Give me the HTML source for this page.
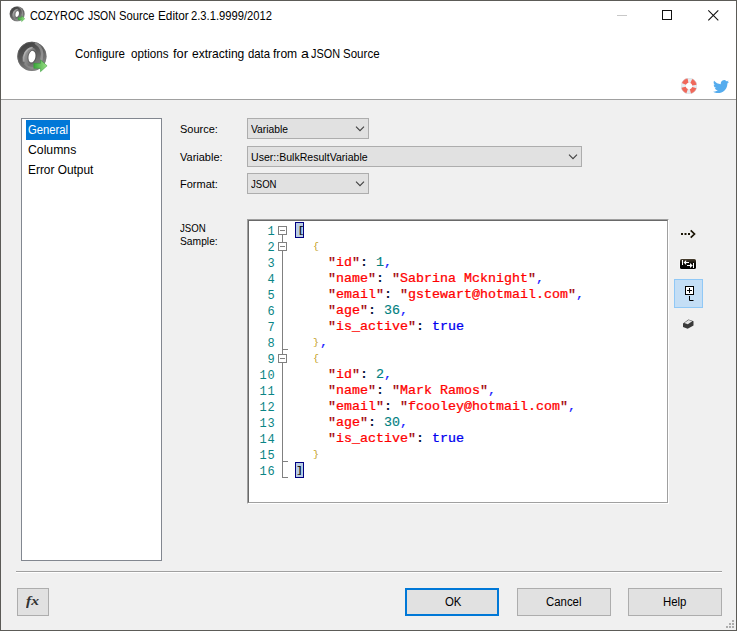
<!DOCTYPE html>
<html>
<head>
<meta charset="utf-8">
<title>COZYROC JSON Source Editor</title>
<style>
html,body{margin:0;padding:0;}
body{width:737px;height:631px;overflow:hidden;background:#f0f0f0;position:relative;font-family:"Liberation Sans",sans-serif;color:#000;}
.abs{position:absolute;}
.t{position:absolute;white-space:nowrap;line-height:1;}
#win{position:absolute;left:0;top:0;width:737px;height:631px;box-sizing:border-box;}
#bl{left:0;top:0;width:1px;height:631px;background:#5b5a56;}
#bt{left:0;top:0;width:737px;height:1px;background:#5c5b57;}
#br{left:736px;top:0;width:1px;height:631px;background:#5c5b57;}
#bb{left:0;top:630px;width:737px;height:1px;background:#5c5b57;}
#hdr{left:1px;top:1px;width:735px;height:98px;background:#fff;}
#hsep{left:1px;top:99px;width:735px;height:1px;background:#a0a0a0;}
#title{position:absolute;left:0;top:0;}
#sub{position:absolute;left:0;top:0;}
#nav{left:21px;top:118px;width:139px;height:441px;border:1px solid #828790;background:#fff;}
.nv{font-size:12px;left:28px;}
#sel{left:26px;top:120px;width:44px;height:20px;background:#0078d7;}
.lb{font-size:11px;left:180px;}
.cb{position:absolute;box-sizing:border-box;height:21px;border:1px solid #adadad;background:#e1e1e1;}
.cb span{position:absolute;left:2.500px;top:5px;transform-origin:0 0;font-size:11px;line-height:1;white-space:nowrap;}
.cb svg{position:absolute;right:3px;top:7px;}
#edo{left:247px;top:219px;width:422px;height:285px;box-sizing:border-box;border-top:1px solid #a0a0a0;border-left:1px solid #a0a0a0;border-right:1px solid #fff;border-bottom:1px solid #fff;}
#ed{left:248px;top:220px;width:420px;height:283px;box-sizing:border-box;background:#fff;border-top:1px solid #696969;border-left:1px solid #696969;border-right:1px solid #a0a0a0;border-bottom:1px solid #a0a0a0;}
.ln{position:absolute;left:0;width:26.500px;text-align:right;font-family:"Liberation Mono",monospace;font-size:12px;letter-spacing:0.800px;color:#0a8585;height:16px;line-height:16px;}
.cl{position:absolute;left:47px;white-space:pre;font-family:"Liberation Mono",monospace;font-size:13.333px;font-weight:normal;-webkit-text-stroke:0.280px;height:16px;line-height:16px;transform-origin:0 12.500px;transform:scaleY(0.890);}
.hb{color:#000;display:inline-block;width:8px;text-align:center;font-size:11px;line-height:1;position:relative;left:1px;top:-0.700px;-webkit-text-stroke:0.200px;} .hbx{position:absolute;left:46px;width:9px;height:16px;box-sizing:border-box;border:1px solid #000080;background:#b8cce4;}
.s{color:#f00;} .q{color:#a00000;} .o{color:#000030;} .c{color:#1a1aff;-webkit-text-stroke:0.200px;} .n{color:#008080;-webkit-text-stroke:0.150px;} .k{color:#0000f0;} .b{color:#bf9a14;-webkit-text-stroke:0;display:inline-block;width:8px;text-align:center;font-size:10px;line-height:1;position:relative;top:-1px;}
.btn{position:absolute;box-sizing:border-box;border:1px solid #adadad;background:#e1e1e1;font-size:13px;text-align:center;}
.bt{font-size:12px;transform-origin:0 0;transform:scaleX(0.95);}
#sep2{left:16px;top:571px;width:706px;height:1px;background:#a0a0a0;border-bottom:1px solid #fff;}
</style>
</head>
<body>
<div id="win">
<div class="abs" id="hdr"></div>
<div class="abs" id="hsep"></div>
<div class="abs" id="bt"></div><div class="abs" id="bb"></div><div class="abs" id="bl"></div><div class="abs" id="br"></div>

<!-- title bar -->
<svg class="abs" style="left:8.900px;top:6.400px" width="16.400" height="16.400" viewBox="0 0 32 32">
<defs>
<linearGradient id="ia" x1="0.2" y1="0" x2="0.7" y2="1"><stop offset="0" stop-color="#3c3c3c"/><stop offset="0.45" stop-color="#5a5a5a"/><stop offset="1" stop-color="#8e8e8e"/></linearGradient>
<linearGradient id="ic" x1="0" y1="0.300" x2="1" y2="0.600"><stop offset="0" stop-color="#b4b4b4"/><stop offset="0.500" stop-color="#8a8a8a"/><stop offset="1" stop-color="#555" stop-opacity="0"/></linearGradient>
<linearGradient id="ib" x1="0" y1="0" x2="1" y2="0"><stop offset="0" stop-color="#3aa63a"/><stop offset="1" stop-color="#9adf86"/></linearGradient>
</defs>
<circle cx="15.900" cy="15.400" r="14.600" fill="url(#ia)"/>
<circle cx="15.900" cy="15.400" r="14.200" fill="none" stroke="#777" stroke-width="0.800" opacity="0.600"/>
<ellipse cx="14.300" cy="15.500" rx="6.800" ry="9.300" fill="url(#ic)" opacity="0.750" transform="rotate(14 14.300 15.500)"/>
<path d="M7.500 20c-1-6 2.500-12 8.500-13.500" fill="none" stroke="#c8c8c8" stroke-width="1.600" opacity="0.550" stroke-linecap="round"/>
<path d="M20 2.500c5 3 7.500 9 5.500 16" fill="none" stroke="#b0b0b0" stroke-width="2.600" opacity="0.550" stroke-linecap="round"/>
<path d="M9 23c3 4 8 5 12 3" fill="none" stroke="#9a9a9a" stroke-width="2" opacity="0.500" stroke-linecap="round"/>
<ellipse cx="16" cy="15.700" rx="3.500" ry="5.900" fill="#fff" transform="rotate(10 16 15.700)"/>
<ellipse cx="16" cy="15.700" rx="4.100" ry="6.500" fill="none" stroke="#444" stroke-width="0.700" opacity="0.600" transform="rotate(10 16 15.700)"/>
<path d="M17.800 22.300h6.700v-3.400l6.600 5.900-6.600 5.900v-3.400h-6.700z" fill="url(#ib)" stroke="#2f9a33" stroke-width="0.500"/></svg>
<div id="title"><span class="t" style="left:30.00px;top:10px;font-size:12px;transform-origin:0 0;transform:scaleX(0.902)">COZYROC </span><span class="t" style="left:87.70px;top:10px;font-size:12px;transform-origin:0 0;transform:scaleX(0.865)">JSON </span><span class="t" style="left:118.80px;top:10px;font-size:12px;transform-origin:0 0;transform:scaleX(0.936)">Source </span><span class="t" style="left:157.70px;top:10px;font-size:12px;transform-origin:0 0;transform:scaleX(0.982)">Editor </span><span class="t" style="left:191.30px;top:10px;font-size:12px;transform-origin:0 0;transform:scaleX(0.934)">2.3.1.9999/2012 </span></div>
<svg class="abs" style="left:610px;top:5px" width="120" height="22" viewBox="0 0 120 22">
<rect x="7" y="10" width="10" height="1" fill="#c8c8c8"/>
<rect x="52.500" y="5.500" width="9" height="9" fill="none" stroke="#111" stroke-width="1"/>
<path d="M98.300 5.300l10 10M108.300 5.300l-10 10" stroke="#111" stroke-width="1.100" fill="none"/>
</svg>

<!-- header -->
<svg class="abs" style="left:16px;top:41px" width="32" height="32" viewBox="0 0 32 32">
<defs>
<linearGradient id="ja" x1="0.2" y1="0" x2="0.7" y2="1"><stop offset="0" stop-color="#3c3c3c"/><stop offset="0.45" stop-color="#5a5a5a"/><stop offset="1" stop-color="#8e8e8e"/></linearGradient>
<linearGradient id="jc" x1="0" y1="0.300" x2="1" y2="0.600"><stop offset="0" stop-color="#b4b4b4"/><stop offset="0.500" stop-color="#8a8a8a"/><stop offset="1" stop-color="#555" stop-opacity="0"/></linearGradient>
<linearGradient id="jb" x1="0" y1="0" x2="1" y2="0"><stop offset="0" stop-color="#3aa63a"/><stop offset="1" stop-color="#9adf86"/></linearGradient>
</defs>
<circle cx="15.900" cy="15.400" r="14.600" fill="url(#ja)"/>
<circle cx="15.900" cy="15.400" r="14.200" fill="none" stroke="#777" stroke-width="0.800" opacity="0.600"/>
<ellipse cx="14.300" cy="15.500" rx="6.800" ry="9.300" fill="url(#jc)" opacity="0.750" transform="rotate(14 14.300 15.500)"/>
<path d="M7.500 20c-1-6 2.500-12 8.500-13.500" fill="none" stroke="#c8c8c8" stroke-width="1.600" opacity="0.550" stroke-linecap="round"/>
<path d="M20 2.500c5 3 7.500 9 5.500 16" fill="none" stroke="#b0b0b0" stroke-width="2.600" opacity="0.550" stroke-linecap="round"/>
<path d="M9 23c3 4 8 5 12 3" fill="none" stroke="#9a9a9a" stroke-width="2" opacity="0.500" stroke-linecap="round"/>
<ellipse cx="16" cy="15.700" rx="3.500" ry="5.900" fill="#fff" transform="rotate(10 16 15.700)"/>
<ellipse cx="16" cy="15.700" rx="4.100" ry="6.500" fill="none" stroke="#444" stroke-width="0.700" opacity="0.600" transform="rotate(10 16 15.700)"/>
<path d="M17.800 22.300h6.700v-3.400l6.600 5.900-6.600 5.900v-3.400h-6.700z" fill="url(#jb)" stroke="#2f9a33" stroke-width="0.500"/></svg>
<div id="sub"><span class="t" style="left:75.15px;top:47px;font-size:13px;transform-origin:0 0;transform:scaleX(0.886)">Configure </span><span class="t" style="left:131.40px;top:47px;font-size:13px;transform-origin:0 0;transform:scaleX(0.893)">options </span><span class="t" style="left:173.15px;top:47px;font-size:13px;transform-origin:0 0;transform:scaleX(0.985)">for </span><span class="t" style="left:191.90px;top:47px;font-size:13px;transform-origin:0 0;transform:scaleX(0.928)">extracting </span><span class="t" style="left:247.90px;top:47px;font-size:13px;transform-origin:0 0;transform:scaleX(0.873)">data </span><span class="t" style="left:273.00px;top:47px;font-size:13px;transform-origin:0 0;transform:scaleX(0.931)">from </span><span class="t" style="left:300.80px;top:47px;font-size:13px;transform-origin:0 0;transform:scaleX(1.092)">a </span><span class="t" style="left:311.00px;top:47px;font-size:13px;transform-origin:0 0;transform:scaleX(0.836)">JSON </span><span class="t" style="left:343.00px;top:47px;font-size:13px;transform-origin:0 0;transform:scaleX(0.888)">Source </span></div>

<svg class="abs" style="left:681px;top:78px" width="16" height="16" viewBox="0 0 16 16">
<circle cx="8" cy="8" r="5.600" fill="none" stroke="#e6ecf0" stroke-width="4.600"/>
<circle cx="8" cy="8" r="5.600" fill="none" stroke="#f0685a" stroke-width="4.600" stroke-dasharray="5.300 3.497" stroke-dashoffset="-1.750"/>
<circle cx="8" cy="8" r="7.900" fill="none" stroke="#d5dde3" stroke-width="0.500"/>
</svg>
<svg class="abs" style="left:712.500px;top:79.600px" width="16" height="13.300" viewBox="0 0 24 20" preserveAspectRatio="none">
<path fill="#55acee" d="M23.950 2.570a10 10 0 0 1-2.820.770 4.960 4.960 0 0 0 2.160-2.720c-.950.560-2 .960-3.130 1.190a4.920 4.920 0 0 0-8.380 4.480C7.690 6.100 4.070 4.130 1.640 1.160a4.820 4.820 0 0 0-.670 2.480c0 1.710.870 3.210 2.190 4.100a4.900 4.900 0 0 1-2.230-.620v.060a4.920 4.920 0 0 0 3.950 4.830 5 5 0 0 1-2.210.080 4.940 4.940 0 0 0 4.600 3.420A9.870 9.870 0 0 1 0 17.540a14 14 0 0 0 7.560 2.210c9.050 0 14-7.500 14-13.980 0-.210 0-.420-.020-.630A9.940 9.940 0 0 0 24 2.590z"/></svg>

<!-- nav -->
<div class="abs" id="nav"></div>
<div class="abs" id="sel"></div>
<div class="t nv" style="top:124px;color:#fff;transform-origin:0 0;transform:scaleX(0.94)">General</div>
<div class="t nv" style="top:144px;transform-origin:0 0;transform:scaleX(1.02)">Columns</div>
<div class="t nv" style="top:164px;transform-origin:0 0;transform:scaleX(0.99)">Error Output</div>

<!-- form -->
<div class="t lb" style="top:124px">Source:</div>
<div class="t lb" style="top:152px">Variable:</div>
<div class="t lb" style="top:179px">Format:</div>
<div class="cb" style="left:247px;top:118px;width:122px"><span style="transform:scaleX(0.935)">Variable</span><svg width="10" height="6" viewBox="0 0 10 6"><path d="M1 0.700l4 4 4-4" fill="none" stroke="#404040" stroke-width="1.100"/></svg></div>
<div class="cb" style="left:247px;top:146px;width:335px"><span style="transform:scaleX(0.96)">User::BulkResultVariable</span><svg width="10" height="6" viewBox="0 0 10 6"><path d="M1 0.700l4 4 4-4" fill="none" stroke="#404040" stroke-width="1.100"/></svg></div>
<div class="cb" style="left:247px;top:173px;width:122px"><span style="transform:scaleX(0.87)">JSON</span><svg width="10" height="6" viewBox="0 0 10 6"><path d="M1 0.700l4 4 4-4" fill="none" stroke="#404040" stroke-width="1.100"/></svg></div>
<div class="t lb" style="top:223px;transform-origin:0 0;transform:scaleX(0.88)">JSON</div>
<div class="t lb" style="top:236px;transform-origin:0 0;transform:scaleX(0.935)">Sample:</div>

<!-- editor -->
<div class="abs" id="edo"></div>
<div class="abs" id="ed">
<div id="lines">
<svg class="abs" style="left:0;top:0" width="60" height="270"><rect x="33" y="14" width="1" height="7" fill="#808080"/><rect x="33" y="30" width="1" height="103" fill="#808080"/><rect x="33" y="142" width="1" height="115" fill="#808080"/><rect x="29.5" y="5.5" width="8" height="8" fill="#fff" stroke="#808080"/><rect x="31" y="9" width="5" height="1" fill="#808080"/><rect x="29.5" y="21.5" width="8" height="8" fill="#fff" stroke="#808080"/><rect x="31" y="25" width="5" height="1" fill="#808080"/><rect x="29.5" y="133.5" width="8" height="8" fill="#fff" stroke="#808080"/><rect x="31" y="137" width="5" height="1" fill="#808080"/><rect x="33" y="128" width="6" height="1" fill="#808080"/><rect x="33" y="240" width="6" height="1" fill="#808080"/><rect x="33" y="256" width="6" height="1" fill="#808080"/></svg>
<div class="hbx" style="top:1px"></div><div class="hbx" style="top:241px"></div>
<div class="ln" style="top:3px">1</div><div class="cl" style="top:2px"><span class="hb">[</span></div>
<div class="ln" style="top:19px">2</div><div class="cl" style="top:18px">  <span class="b">{</span></div>
<div class="ln" style="top:35px">3</div><div class="cl" style="top:34px">    <span class="q">&quot;</span><span class="s">id</span><span class="q">&quot;</span><span class="o">:</span> <span class="n">1</span><span class="c">,</span></div>
<div class="ln" style="top:51px">4</div><div class="cl" style="top:50px">    <span class="q">&quot;</span><span class="s">name</span><span class="q">&quot;</span><span class="o">:</span> <span class="q">&quot;</span><span class="s">Sabrina Mcknight</span><span class="q">&quot;</span><span class="c">,</span></div>
<div class="ln" style="top:67px">5</div><div class="cl" style="top:66px">    <span class="q">&quot;</span><span class="s">email</span><span class="q">&quot;</span><span class="o">:</span> <span class="q">&quot;</span><span class="s">gstewart@hotmail.com</span><span class="q">&quot;</span><span class="c">,</span></div>
<div class="ln" style="top:83px">6</div><div class="cl" style="top:82px">    <span class="q">&quot;</span><span class="s">age</span><span class="q">&quot;</span><span class="o">:</span> <span class="n">36</span><span class="c">,</span></div>
<div class="ln" style="top:99px">7</div><div class="cl" style="top:98px">    <span class="q">&quot;</span><span class="s">is_active</span><span class="q">&quot;</span><span class="o">:</span> <span class="k">true</span></div>
<div class="ln" style="top:115px">8</div><div class="cl" style="top:114px">  <span class="b">}</span><span class="c">,</span></div>
<div class="ln" style="top:131px">9</div><div class="cl" style="top:130px">  <span class="b">{</span></div>
<div class="ln" style="top:147px">10</div><div class="cl" style="top:146px">    <span class="q">&quot;</span><span class="s">id</span><span class="q">&quot;</span><span class="o">:</span> <span class="n">2</span><span class="c">,</span></div>
<div class="ln" style="top:163px">11</div><div class="cl" style="top:162px">    <span class="q">&quot;</span><span class="s">name</span><span class="q">&quot;</span><span class="o">:</span> <span class="q">&quot;</span><span class="s">Mark Ramos</span><span class="q">&quot;</span><span class="c">,</span></div>
<div class="ln" style="top:179px">12</div><div class="cl" style="top:178px">    <span class="q">&quot;</span><span class="s">email</span><span class="q">&quot;</span><span class="o">:</span> <span class="q">&quot;</span><span class="s">fcooley@hotmail.com</span><span class="q">&quot;</span><span class="c">,</span></div>
<div class="ln" style="top:195px">13</div><div class="cl" style="top:194px">    <span class="q">&quot;</span><span class="s">age</span><span class="q">&quot;</span><span class="o">:</span> <span class="n">30</span><span class="c">,</span></div>
<div class="ln" style="top:211px">14</div><div class="cl" style="top:210px">    <span class="q">&quot;</span><span class="s">is_active</span><span class="q">&quot;</span><span class="o">:</span> <span class="k">true</span></div>
<div class="ln" style="top:227px">15</div><div class="cl" style="top:226px">  <span class="b">}</span></div>
<div class="ln" style="top:243px">16</div><div class="cl" style="top:242px"><span class="hb" style="left:-0.500px">]</span></div>
</div><!--endlines-->
</div>

<!-- toolbar -->
<svg class="abs" style="left:672px;top:224px" width="36" height="112" viewBox="672 224 36 112">
<g fill="#1a1405">
<rect x="681" y="233" width="2" height="2"/><rect x="684.500" y="233" width="2" height="2"/><rect x="688" y="233" width="2" height="2"/>
</g>
<path d="M690.700 230.300l3.800 3.700-3.800 3.700" fill="none" stroke="#1a1405" stroke-width="1.700"/>
<rect x="679.500" y="258.500" width="17" height="11" rx="2" fill="#fff" opacity="0.700"/>
<linearGradient id="tg" x1="0" y1="0" x2="0" y2="1"><stop offset="0" stop-color="#4a4030"/><stop offset="0.450" stop-color="#0c0a06"/><stop offset="1" stop-color="#000"/></linearGradient>
<rect x="680" y="259" width="16" height="10" rx="1.600" fill="url(#tg)"/>
<g fill="#fff"><rect x="682" y="260" width="1" height="5"/><path d="M683.600 262.500l2.500-2.400v4.800z"/><rect x="686" y="262" width="3" height="1"/>
<rect x="687" y="265" width="3" height="1"/><path d="M692.700 265.500l-2.700-2.500v5z"/><rect x="693" y="263" width="1" height="5"/></g>
<rect x="674.500" y="279.500" width="28" height="28" fill="#c4def5" stroke="#90c8f6"/>
<rect x="685.500" y="286.500" width="8" height="8" fill="#fff" stroke="#000"/>
<path d="M687 290.500h5M689.500 288v5" stroke="#000" stroke-width="1" fill="none"/>
<path d="M689.500 296v4.500h4" stroke="#000" stroke-width="1" fill="none"/>
<path d="M683 323.500l5.500-4 5 1.800v4.200l-5.800 3.200-4.700-1.700z" fill="#3a3a3a"/>
<path d="M684.300 322.900l4.300-2.900 3.600 1.300-4.400 2.900z" fill="#e4e4e4"/>
</svg>
<!-- grip -->
<svg class="abs" style="left:724px;top:618px" width="12" height="12" viewBox="724 618 12 12"><g fill="#adadad">
<rect x="732" y="620" width="2" height="2"/><rect x="729" y="623" width="2" height="2"/><rect x="732" y="623" width="2" height="2"/>
<rect x="726" y="626" width="2" height="2"/><rect x="729" y="626" width="2" height="2"/><rect x="732" y="626" width="2" height="2"/></g></svg>

<!-- bottom -->
<div class="abs" id="sep2"></div>
<div class="btn" style="left:17px;top:588px;width:32px;height:28px;"><span class="t" style="left:8px;top:6px;color:#333;font-family:'Liberation Serif',serif;font-style:italic;font-weight:bold;font-size:12.500px;transform-origin:0 0;transform:scaleX(1.25)">fx</span></div>
<div class="btn" style="left:405px;top:588px;width:94px;height:28px;border:2px solid #0078d7;"><span class="t bt" style="left:37.500px;top:6px">OK</span></div>
<div class="btn" style="left:517px;top:588px;width:94px;height:28px;"><span class="t bt" style="left:28px;top:7px">Cancel</span></div>
<div class="btn" style="left:628px;top:588px;width:94px;height:28px;"><span class="t bt" style="left:33.500px;top:7px">Help</span></div>
</div>
</body>
</html>
